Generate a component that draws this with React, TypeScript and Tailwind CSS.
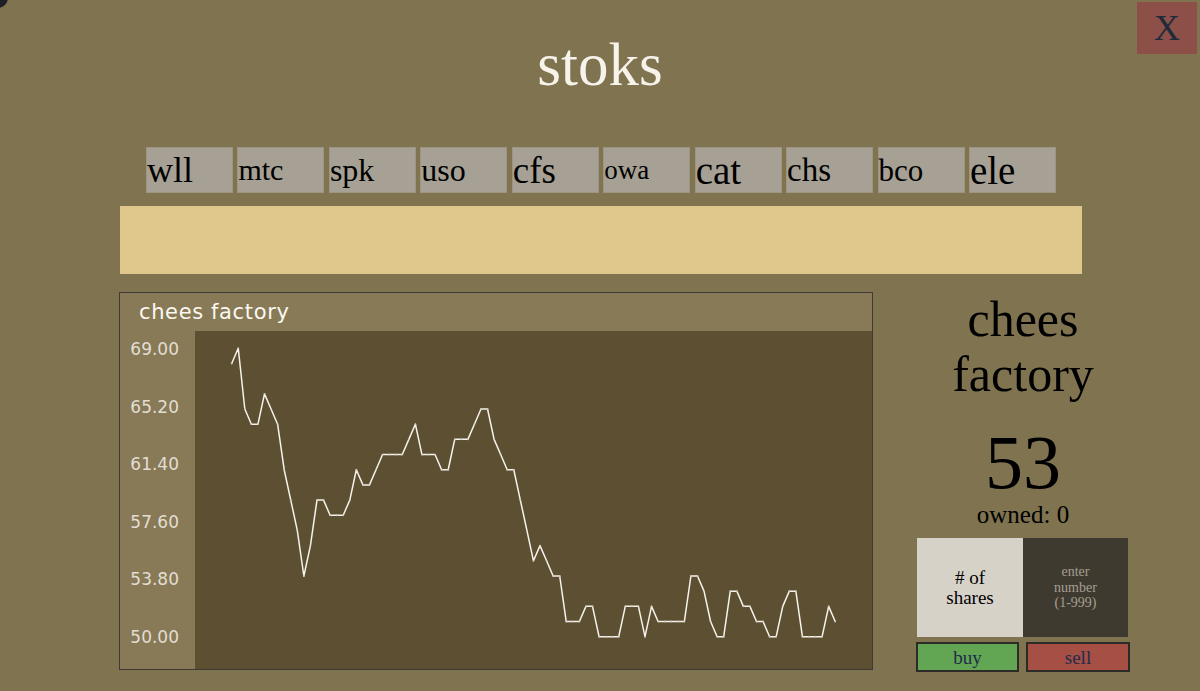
import { useState } from 'react'

const TICKERS = [
    { sym: 'wll', size: 'text-[36px]' },
    { sym: 'mtc', size: 'text-[30px]' },
    { sym: 'spk', size: 'text-[32px]' },
    { sym: 'uso', size: 'text-[32px]' },
    { sym: 'cfs', size: 'text-[37px]' },
    { sym: 'owa', size: 'text-[27px]' },
    { sym: 'cat', size: 'text-[39px]' },
    { sym: 'chs', size: 'text-[33px]' },
    { sym: 'bco', size: 'text-[31px]' },
    { sym: 'ele', size: 'text-[39px]' },
]

// price history for the selected company, oldest first
const HISTORY = [
    68, 69, 65, 64, 64, 66, 65, 64, 61, 59, 57, 54, 56, 59, 59, 58, 58, 58, 59, 61, 60, 60,
    61, 62, 62, 62, 62, 63, 64, 62, 62, 62, 61, 61, 63, 63, 63, 64, 65, 65, 63, 62, 61, 61,
    59, 57, 55, 56, 55, 54, 54, 51, 51, 51, 52, 52, 50, 50, 50, 50, 52, 52, 52, 50, 52, 51,
    51, 51, 51, 51, 54, 54, 53, 51, 50, 50, 53, 53, 52, 52, 51, 51, 50, 50, 52, 53, 53, 50,
    50, 50, 50, 52, 51,
]

const PLOT_W = 677
const PLOT_H = 338

function PriceChart({ name, history }: { name: string; history: number[] }) {
    const max = Math.max(...history)
    const min = Math.min(...history)
    const step = (max - min) / 5
    const labels = Array.from({ length: 6 }, (_, i) => (max - step * i).toFixed(2))

    const top = 17.3
    const span = 288.4
    const points = history.map((v, i) => {
        const x = 36.7 + i * 6.56
        const y = top + ((max - v) / (max - min)) * span
        return [x, y] as const
    })

    return (
        <div className="w-[754px] h-[378px] border border-[#3c3b35] bg-[#887a57] flex flex-col">
            <div className="h-[38px] pl-[19px] text-[21px] leading-[38px] tracking-[0.03em] text-[#fbf8f0] font-['DejaVu_Sans',sans-serif]">
                {name}
            </div>
            <div className="flex flex-1">
                <div className="w-[75px] flex flex-col justify-between items-end pr-4 pt-[8px] pb-[22px] text-[17px] leading-[20px] text-[#e2ded3] font-['DejaVu_Sans',sans-serif]">
                    {labels.map((l) => (
                        <span key={l}>{l}</span>
                    ))}
                </div>
                <div className="flex-1 bg-[#5d4f32]">
                    <svg width={PLOT_W} height={PLOT_H} viewBox={`0 0 ${PLOT_W} ${PLOT_H}`}>
                        <polyline
                            points={points.map(([x, y]) => `${x},${y}`).join(' ')}
                            fill="none"
                            stroke="#f6f3ec"
                            strokeWidth={1.5}
                            strokeLinejoin="round"
                        />
                        {points.map(([x, y], i) => (
                            <circle key={i} cx={x} cy={y} r={0.9} fill="#cfc9bb" />
                        ))}
                    </svg>
                </div>
            </div>
        </div>
    )
}

export default function App() {
    const [selected, setSelected] = useState('chs')
    const [owned] = useState(0)

    return (
        <div className="relative w-full h-[691px] overflow-hidden bg-[#7f7350] font-['Liberation_Serif',serif]">
            <div className="absolute left-[-13px] top-[-13px] w-[21px] h-[21px] rounded-full bg-[#1d2126]" />

            <button className="absolute top-[2px] right-[3px] w-[60px] h-[52px] bg-[#8c5049] text-[36px] leading-none text-[#1f2b3b] flex items-center justify-center">
                X
            </button>

            <h1 className="pt-[34px] h-[93px] text-center text-[61px] leading-none text-[#f7f3ea]">stoks</h1>

            <div className="ml-[146px] mt-[54px] flex gap-[4.45px]">
                {TICKERS.map((t) => (
                    <button
                        key={t.sym}
                        onClick={() => setSelected(t.sym)}
                        className="w-[87px] h-[46px] bg-[#a6a194] border border-[#9b9582] flex items-center text-black"
                    >
                        <span className={`${t.size} leading-none`}>{t.sym}</span>
                    </button>
                ))}
            </div>

            <div className="ml-[120px] mt-[13px] w-[962px] h-[68px] bg-[#e0c78b]" />

            <div className="ml-[119px] mt-[18px] flex">
                <PriceChart name="chees factory" history={HISTORY} />

                <div className="ml-[43px] w-[214px] flex flex-col items-center text-black">
                    <div className="text-[50px] leading-[55px] text-center">
                        chees
                        <br />
                        factory
                    </div>
                    <div className="mt-[22px] text-[76px] leading-none">53</div>
                    <div className="mt-[2px] text-[25px] leading-none">owned: {owned}</div>

                    <div className="mt-[11px] self-start ml-[1px] w-[211px] h-[99px] flex">
                        <div className="w-[106px] bg-[#d6d2c8] flex items-center justify-center text-center text-[19px] leading-[20px]">
                            # of
                            <br />
                            shares
                        </div>
                        <div className="flex-1 bg-[#3f3a30] flex items-center justify-center text-center text-[14px] leading-[15.5px] text-[#a49e90]">
                            enter
                            <br />
                            number
                            <br />
                            (1-999)
                        </div>
                    </div>

                    <div className="mt-[5px] w-[214px] flex justify-between">
                        <button className="w-[103px] h-[30px] border-2 border-[#2d2b27] bg-[#62a553] text-[19px] leading-none text-[#1e2d4a]">
                            buy
                        </button>
                        <button className="w-[104px] h-[30px] border-2 border-[#2d2b27] bg-[#a54f45] text-[19px] leading-none text-[#1e2d4a]">
                            sell
                        </button>
                    </div>
                </div>
            </div>
        </div>
    )
}
